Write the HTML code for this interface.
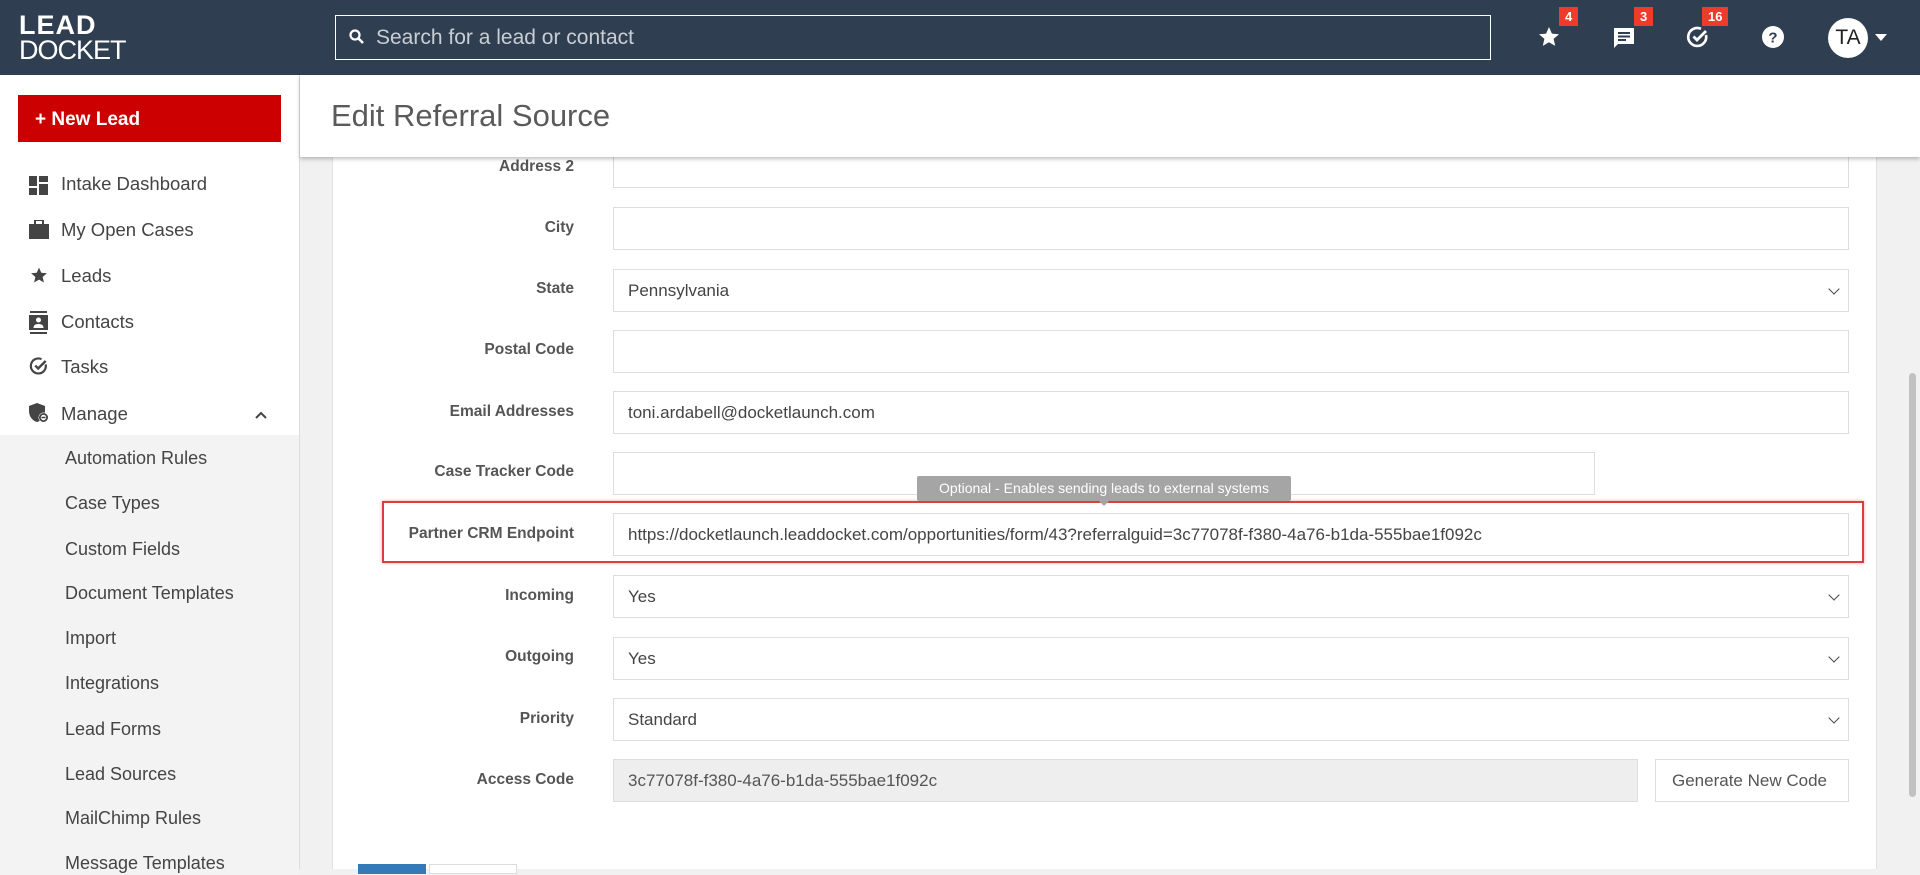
<!DOCTYPE html>
<html><head><meta charset="utf-8">
<style>
*{box-sizing:border-box;margin:0;padding:0}
body{width:1920px;height:869px;overflow:hidden;background:#f1f1f1;font-family:"Liberation Sans",sans-serif;color:#444;position:relative}
.hdr{position:absolute;left:0;top:0;width:1920px;height:75px;background:#2f3e50}
.logo{position:absolute;left:19px;top:12px;color:#fff;line-height:1}
.logo .a{font-weight:bold;font-size:27px;letter-spacing:1px}
.logo .b{font-size:27px;font-weight:300;letter-spacing:-1px;margin-top:-2px}
.search{position:absolute;left:335px;top:15px;width:1156px;height:45px;border:1.5px solid #fff;color:#c9ced4;font-size:21px;padding:10px 0 0 40px}
.search svg{position:absolute;left:13px;top:13px}
.ic{position:absolute;top:25px}
.badge{position:absolute;top:7px;background:#ef3b2c;color:#fff;font-size:13px;font-weight:bold;height:19px;line-height:19px;padding:0 6px}
.av{position:absolute;left:1828px;top:18px;width:40px;height:40px;border-radius:50%;background:#fff;color:#222;font-size:21px;text-align:center;line-height:40px}
.side{position:absolute;left:0;top:75px;width:300px;height:794px;background:#fff;border-right:1px solid #ddd}
.sub{position:absolute;left:0;top:360px;width:299px;height:440px;background:#f3f3f3}
.nl{position:absolute;left:18px;top:20px;width:263px;height:47px;background:#cc0000;color:#fff;font-size:19px;font-weight:bold;padding:14px 0 0 17px}
.ni{position:absolute;left:61px;font-size:18.5px;color:#444}
.nic{position:absolute;left:29px}
.si{position:absolute;left:65px;font-size:18px;color:#444}
.top{position:absolute;left:300px;top:75px;width:1620px;height:82px;background:#fff;box-shadow:0 2px 4px rgba(0,0,0,.25);z-index:3}
.top h1{position:absolute;left:31px;top:23px;font-weight:normal;font-size:31px;color:#5a5a5a}
.card{position:absolute;left:332px;top:157px;width:1545px;height:712px;background:#fff;border-left:1px solid #e2e2e2;border-right:1px solid #e2e2e2}
.lbl{position:absolute;right:1346px;width:300px;text-align:right;font-weight:bold;font-size:15.5px;color:#555}
.inp{position:absolute;left:613px;width:1236px;height:43px;border:1px solid #ddd;background:#fff;font-size:17px;color:#444;padding:11px 0 0 14px}
.sel::after{content:"";position:absolute;right:10px;top:15px;width:7px;height:7px;border-right:1.8px solid #444;border-bottom:1.8px solid #444;transform:rotate(45deg)}
.sb{position:absolute;left:1906px;top:75px;width:14px;height:794px;background:#f1f1f1}
.sb div{position:absolute;left:3px;top:298px;width:7px;height:424px;background:#c1c1c1;border-radius:4px}
</style></head><body>
<div class="hdr">
 <div class="logo"><div class="a">LEAD</div><div class="b">DOCKET</div></div>
 <div class="search"><svg width="16" height="16" viewBox="0 0 16 16"><circle cx="6" cy="6" r="4.5" fill="none" stroke="#fff" stroke-width="2.2"/><path d="M9.5 9.5L14 14" stroke="#fff" stroke-width="2.6"/></svg>Search for a lead or contact</div>
 <svg class="ic" style="left:1537px" width="24" height="24" viewBox="0 0 24 24"><path fill="#fff" d="M12 2l2.9 6.6 7.1.6-5.4 4.7 1.6 7-6.2-3.7-6.2 3.7 1.6-7L2 9.2l7.1-.6z"/></svg>
 <div class="badge" style="left:1559px">4</div>
 <svg class="ic" style="left:1612px;top:26px" width="24" height="24" viewBox="0 0 24 24"><path fill="#fff" d="M2 2h20v16H6l-4 4z"/><path stroke="#2f3e50" stroke-width="2" d="M6 7h12M6 10.5h12M6 14h8"/></svg>
 <div class="badge" style="left:1634px">3</div>
 <svg class="ic" style="left:1686px" width="24" height="24" viewBox="0 0 24 24"><path fill="none" stroke="#fff" stroke-width="2.6" d="M20 10A9 9 0 1 1 15 3.8"/><path fill="none" stroke="#fff" stroke-width="2.8" d="M7.5 11.5l3.5 3.5 9-9"/></svg>
 <div class="badge" style="left:1702px">16</div>
 <svg class="ic" style="left:1761px" width="24" height="24" viewBox="0 0 24 24"><circle cx="12" cy="12" r="11" fill="#fff"/><text x="12" y="17.5" text-anchor="middle" font-size="15" font-weight="bold" fill="#2f3e50" font-family="Liberation Sans">?</text></svg>
 <div class="av">TA</div>
 <svg style="position:absolute;left:1875px;top:34px" width="12" height="7"><path d="M0 0h12L6 7z" fill="#fff"/></svg>
</div>
<div class="side">
 <div class="sub"></div>
 <div class="nl">+ New Lead</div>
 <svg class="nic" style="top:101px" width="19" height="19" viewBox="0 0 19 19" fill="#444"><rect x="0" y="0" width="8" height="10"/><rect x="10" y="0" width="9" height="6"/><rect x="0" y="12" width="8" height="7"/><rect x="10" y="8" width="9" height="11"/></svg>
 <div class="ni" style="top:98px">Intake Dashboard</div>
 <svg class="nic" style="top:145px" width="20" height="19" viewBox="0 0 20 19" fill="#444"><rect x="0" y="4" width="20" height="15"/><rect x="6" y="0" width="8" height="5" fill="none" stroke="#444" stroke-width="2"/></svg>
 <div class="ni" style="top:144px">My Open Cases</div>
 <svg class="nic" style="top:191px" width="20" height="19" viewBox="0 0 24 24"><path fill="#444" d="M12 2l2.9 6.6 7.1.6-5.4 4.7 1.6 7-6.2-3.7-6.2 3.7 1.6-7L2 9.2l7.1-.6z"/></svg>
 <div class="ni" style="top:190px">Leads</div>
 <svg class="nic" style="top:236px" width="19" height="23" viewBox="0 0 19 23" fill="#444"><rect x="1" y="0" width="17" height="2"/><rect x="1" y="21" width="17" height="2"/><rect x="0" y="4" width="19" height="15"/><circle cx="9.5" cy="9" r="2.5" fill="#fff"/><path d="M4.5 17c0-3 2-4 5-4s5 1 5 4z" fill="#fff"/></svg>
 <div class="ni" style="top:236px">Contacts</div>
 <svg class="nic" style="top:281px" width="20" height="20" viewBox="0 0 24 24"><path fill="none" stroke="#444" stroke-width="2.6" d="M20 10A9 9 0 1 1 15 3.8"/><path fill="none" stroke="#444" stroke-width="2.8" d="M7.5 11.5l3.5 3.5 9-9"/></svg>
 <div class="ni" style="top:281px">Tasks</div>
 <svg class="nic" style="top:328px" width="20" height="20" viewBox="0 0 20 20"><path fill="#444" d="M8 0l8 3v5c0 6-4 10-8 11C4 18 0 14 0 8V3z"/><circle cx="14.5" cy="14.5" r="5" fill="#fff"/><circle cx="14.5" cy="14.5" r="3.6" fill="none" stroke="#444" stroke-width="1.8"/><path d="M12.5 14.5h4" stroke="#444" stroke-width="1.5"/></svg>
 <div class="ni" style="top:328px">Manage</div>
 <svg style="position:absolute;left:255px;top:336px" width="12" height="8"><path d="M1 7l5-5 5 5" fill="none" stroke="#444" stroke-width="2"/></svg>
 <div class="si" style="top:373px">Automation Rules</div>
 <div class="si" style="top:418px">Case Types</div>
 <div class="si" style="top:464px">Custom Fields</div>
 <div class="si" style="top:508px">Document Templates</div>
 <div class="si" style="top:553px">Import</div>
 <div class="si" style="top:598px">Integrations</div>
 <div class="si" style="top:644px">Lead Forms</div>
 <div class="si" style="top:689px">Lead Sources</div>
 <div class="si" style="top:733px">MailChimp Rules</div>
 <div class="si" style="top:778px">Message Templates</div>
</div>
<div class="top"><h1>Edit Referral Source</h1></div>
<div class="card" style="left:332px"></div>
<div style="position:absolute;left:0;top:0">
 <div class="lbl" style="top:158px;left:274px">Address 2</div>
 <div class="inp" style="top:145px"></div>
 <div class="lbl" style="top:219px;left:274px">City</div>
 <div class="inp" style="top:207px"></div>
 <div class="lbl" style="top:280px;left:274px">State</div>
 <div class="inp sel" style="top:269px">Pennsylvania</div>
 <div class="lbl" style="top:341px;left:274px">Postal Code</div>
 <div class="inp" style="top:330px"></div>
 <div class="lbl" style="top:403px;left:274px">Email Addresses</div>
 <div class="inp" style="top:391px">toni.ardabell@docketlaunch.com</div>
 <div class="lbl" style="top:463px;left:274px">Case Tracker Code</div>
 <div class="inp" style="top:452px;width:982px"></div>
 <div style="position:absolute;left:917px;top:476px;width:374px;height:25px;background:#a5a5a5;color:#fff;font-size:14px;text-align:center;line-height:25px;border-radius:2px;z-index:2">Optional - Enables sending leads to external systems</div>
 <div style="position:absolute;left:1098px;top:500px;width:0;height:0;border-left:6px solid transparent;border-right:6px solid transparent;border-top:6px solid #a5a5a5;z-index:2"></div>
 <div class="lbl" style="top:525px;left:274px">Partner CRM Endpoint</div>
 <div class="inp" style="top:513px">https://docketlaunch.leaddocket.com/opportunities/form/43?referralguid=3c77078f-f380-4a76-b1da-555bae1f092c</div>
 <div style="position:absolute;left:382px;top:501px;width:1482px;height:62px;border:2px solid #e03c3c;box-shadow:0 0 3px rgba(224,60,60,.5)"></div>
 <div class="lbl" style="top:587px;left:274px">Incoming</div>
 <div class="inp sel" style="top:575px">Yes</div>
 <div class="lbl" style="top:648px;left:274px">Outgoing</div>
 <div class="inp sel" style="top:637px">Yes</div>
 <div class="lbl" style="top:710px;left:274px">Priority</div>
 <div class="inp sel" style="top:698px">Standard</div>
 <div class="lbl" style="top:771px;left:274px">Access Code</div>
 <div class="inp" style="top:759px;width:1025px;background:#eee;color:#555">3c77078f-f380-4a76-b1da-555bae1f092c</div>
 <div class="inp" style="top:759px;left:1655px;width:194px;color:#555;padding-left:16px">Generate New Code</div>
 <div style="position:absolute;left:358px;top:864px;width:68px;height:10px;background:#337ab7"></div>
 <div style="position:absolute;left:429px;top:864px;width:88px;height:10px;background:#fff;border:1px solid #ddd"></div>
</div>
<div class="sb"><div></div></div>
</body></html>
